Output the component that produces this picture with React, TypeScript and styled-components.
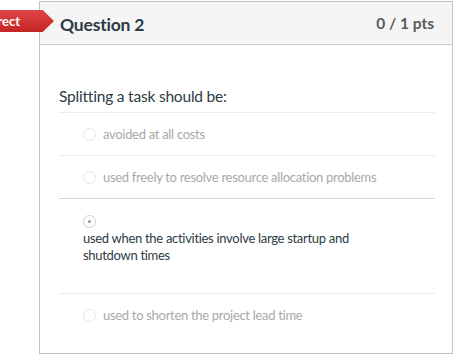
import React from 'react';
import styled, { createGlobalStyle } from 'styled-components';

const GlobalStyle = createGlobalStyle`
  html, body {
    margin: 0;
    padding: 0;
    background: #ffffff;
    font-family: Lato, "Open Sans", "Liberation Sans", sans-serif;
  }
`;

const Page = styled.div`
  position: relative;
  width: 474px;
  height: 362px;
  padding: 1px 0 0 39px;
  box-sizing: border-box;
  overflow: hidden;
`;

const Card = styled.div`
  position: relative;
  width: 414px;
  height: 353px;
  box-sizing: border-box;
  border: 1px solid #c4c4c4;
  background: #fff;
`;

const Header = styled.div`
  display: flex;
  justify-content: space-between;
  align-items: flex-start;
  height: 43px;
  box-sizing: border-box;
  padding: 11px 18px 0 20px;
  background: #f5f5f5;
  border-bottom: 1px solid #c9c9c9;
`;

const Title = styled.div`
  font-size: 17.5px;
  font-weight: 700;
  color: #2d3b45;
  line-height: 22px;
  letter-spacing: -0.2px;
  margin-top: 1px;
`;

const Points = styled.div`
  font-size: 15.5px;
  font-weight: 700;
  color: #5a5a5a;
  line-height: 20px;
`;

const Tag = styled.div`
  position: absolute;
  top: 10px;
  left: -40px;
  width: 94px;
  height: 22px;
  padding-right: 34px;
  box-sizing: border-box;
  display: flex;
  align-items: center;
  justify-content: flex-end;
  background: linear-gradient(#e04545, #c42525);
  color: #fff;
  font-size: 13px;
  font-weight: 700;
  clip-path: polygon(0 0, 88% 0, 100% 50%, 88% 100%, 0 100%);
`;

const Body = styled.div`
  padding: 40px 17px 0 19px;
`;

const Prompt = styled.div`
  font-size: 15.5px;
  letter-spacing: -0.2px;
  color: #2d3b45;
  line-height: 22px;
  margin-bottom: 5px;
`;

const Answer = styled.div<{ $strong?: boolean }>`
  display: flex;
  flex-direction: ${(p) => (p.$strong ? 'column' : 'row')};
  align-items: ${(p) => (p.$strong ? 'flex-start' : 'center')};
  gap: ${(p) => (p.$strong ? '2px' : '7px')};
  border-top: 1px solid ${(p) => (p.$strong ? '#d6d6d6' : '#ececec')};
  padding: ${(p) => (p.$strong ? '16px 0 29px 24px' : '13px 0 12px 24px')};
`;

const Radio = styled.span<{ $checked?: boolean }>`
  width: 11px;
  height: 11px;
  flex: none;
  border-radius: 50%;
  border: 1px solid ${(p) => (p.$checked ? '#cfcfcf' : '#e6e6e6')};
  display: flex;
  align-items: center;
  justify-content: center;
  &::after {
    content: '';
    width: 3px;
    height: 3px;
    border-radius: 50%;
    background: ${(p) => (p.$checked ? '#9a9a9a' : 'transparent')};
  }
`;

const AnswerText = styled.span<{ $strong?: boolean }>`
  font-size: 13px;
  letter-spacing: -0.3px;
  line-height: 17px;
  color: ${(p) => (p.$strong ? '#2d3b45' : '#a9a9a9')};
  max-width: ${(p) => (p.$strong ? '280px' : 'none')};
`;

const answers = [
  { text: 'avoided at all costs', picked: false },
  { text: 'used freely to resolve resource allocation problems', picked: false },
  { text: 'used when the activities involve large startup and shutdown times', picked: true },
  { text: 'used to shorten the project lead time', picked: false },
];

export default function App() {
  return (
    <Page>
      <GlobalStyle />
      <Card>
        <Header>
          <Title>Question 2</Title>
          <Points>0 / 1 pts</Points>
        </Header>
        <Body>
          <Prompt>Splitting a task should be:</Prompt>
          {answers.map((a) => (
            <Answer key={a.text} $strong={a.picked}>
              <Radio $checked={a.picked} />
              <AnswerText $strong={a.picked}>{a.text}</AnswerText>
            </Answer>
          ))}
        </Body>
      </Card>
      <Tag>Incorrect</Tag>
    </Page>
  );
}
